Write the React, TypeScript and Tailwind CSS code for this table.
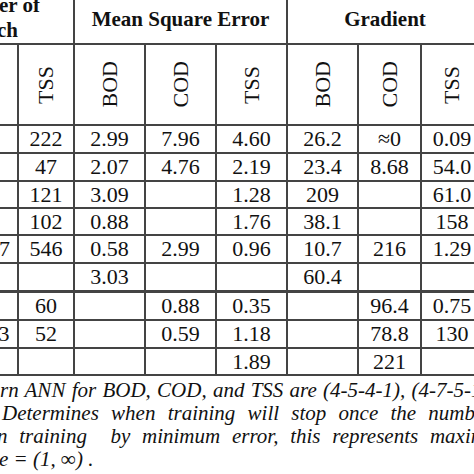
const rows: string[][] = [
  ['', '', '222', '2.99', '7.96', '4.60', '26.2', '≈0', '0.09'],
  ['', '', '47', '2.07', '4.76', '2.19', '23.4', '8.68', '54.0'],
  ['', '', '121', '3.09', '', '1.28', '209', '', '61.0'],
  ['', '', '102', '0.88', '', '1.76', '38.1', '', '158'],
  ['', '187', '546', '0.58', '2.99', '0.96', '10.7', '216', '1.29'],
  ['', '', '', '3.03', '', '', '60.4', '', ''],
  ['', '', '60', '', '0.88', '0.35', '', '96.4', '0.75'],
  ['', '113', '52', '', '0.59', '1.18', '', '78.8', '130'],
  ['', '', '', '', '', '1.89', '', '221', ''],
];

// the first two columns sit off the left edge, like the cropped source
const subHeads = ['', '', 'TSS', 'BOD', 'COD', 'TSS', 'BOD', 'COD', 'TSS'];

const cell = 'flex items-center justify-center border-r-2 border-b-2 border-[#444]';

const App = () => {
  return (
    <div
      className="w-[474px] h-[474px] overflow-hidden bg-white text-[#111]"
      style={{ fontFamily: '"Liberation Serif", "Times New Roman", serif' }}
    >
      <div className="-ml-[80px] -mt-[4px] w-[564px] grid grid-cols-[50px_49px_56px_71px_71px_71px_71px_63px_62px] grid-rows-[49px_81px_28px_28px_27px_27px_28px_29px_28px_28px_27px]">
        <div className={`${cell} col-span-3 text-[21px] font-bold leading-[25px]`}>
          <div className="w-full -mt-[4px] text-right">
            <div className="pr-[33px] whitespace-nowrap">Number of</div>
            <div className="pr-[55px] whitespace-nowrap">epoch</div>
          </div>
        </div>
        <div className={`${cell} col-span-3 text-[21px] font-bold whitespace-nowrap`}>Mean Square Error</div>
        <div className={`${cell} col-span-3 text-[21px] font-bold whitespace-nowrap`}>Gradient</div>

        {subHeads.map((h, i) => (
          <div key={'h' + i} className={cell}>
            <span className="[writing-mode:vertical-rl] rotate-180 text-[22px] leading-none">{h}</span>
          </div>
        ))}

        {rows.map((r, ri) =>
          r.map((v, ci) => (
            <div
              key={ri + '-' + ci}
              className={`flex items-center justify-center border-r-2 border-[#444] text-[22px] leading-none whitespace-nowrap ${
                ri === 5 ? 'border-b-[3px]' : 'border-b-2'
              }`}
            >
              {v}
            </div>
          ))
        )}
      </div>

      <div className="mt-[3px] italic text-[21px] leading-[23px] whitespace-pre">
        <div className="[word-spacing:1px]">rn ANN for BOD, COD, and TSS are (4-5-4-1), (4-7-5-1),</div>
        <div className="ml-[2px] [word-spacing:7px]">Determines when training will stop once the number</div>
        <div className="-ml-[3px] [word-spacing:6.5px]">n training  by minimum error, this represents maximum</div>
        <div className="-ml-[1px]">e = (1, ∞) .</div>
      </div>
    </div>
  );
};

export default App;
